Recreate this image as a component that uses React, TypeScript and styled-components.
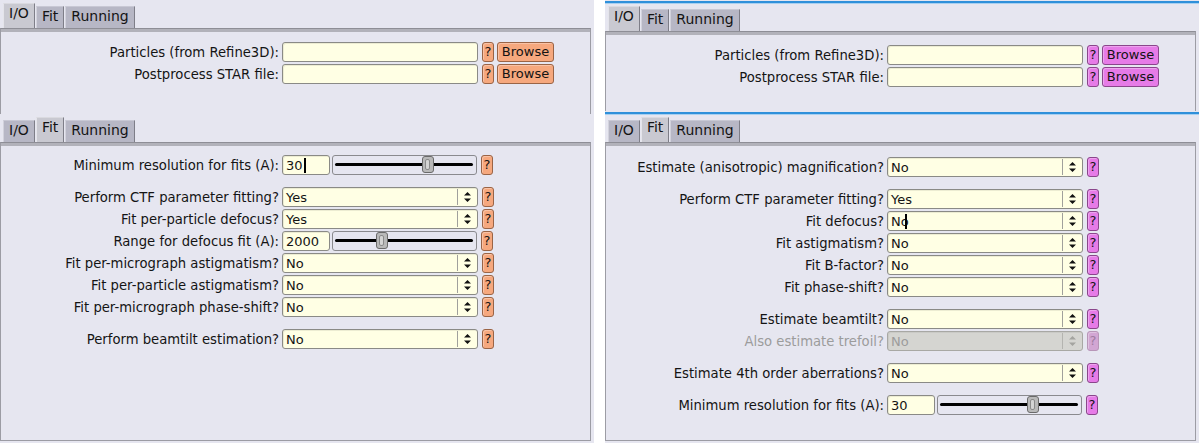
import React from 'react';
import styled, { createGlobalStyle } from 'styled-components';

const GlobalStyle = createGlobalStyle`
  html, body {
    margin: 0;
    padding: 0;
    background: #ffffff;
  }
  body {
    font-family: 'DejaVu Sans', 'Liberation Sans', sans-serif;
    color: #141414;
  }
`;

const accents = {
  orange: { fill: '#f6a87e', edge: '#9a6446' },
  pink: { fill: '#e67be7', edge: '#8a468b' },
};
type Accent = keyof typeof accents;

type FieldRow =
  | { kind: 'file'; label: string }
  | { kind: 'select'; label: string; value: string; spaced?: boolean; disabled?: boolean; caret?: boolean }
  | { kind: 'slider'; label: string; value: string; pos: number; spaced?: boolean; caret?: boolean };

const Page = styled.div`
  display: flex;
  gap: 11px;
  width: 1199px;
  height: 443px;
  overflow: hidden;
`;

const Half = styled.div`
  width: 594px;
  display: flex;
  flex-direction: column;
  background: #e6e6f0;
`;

const Frame = styled.section<{ $h?: number; $pad: number }>`
  display: flex;
  flex-direction: column;
  flex: ${p => (p.$h ? 'none' : 1)};
  height: ${p => (p.$h ? `${p.$h}px` : 'auto')};
  padding-top: ${p => p.$pad}px;
  box-sizing: border-box;
`;

const TopLine = styled.div`
  height: 2px;
  margin: 1px 0 3px;
  background: #2f90da;
  box-shadow: 0 1px 0 #a8d0f0;
`;

const TabBar = styled.div`
  display: flex;
  align-items: flex-end;
  gap: 1px;
  height: 25px;
  padding-left: 3px;
`;

const Tab = styled.div<{ $active?: boolean }>`
  box-sizing: border-box;
  height: ${p => (p.$active ? 25 : 22)}px;
  padding: 0 5px;
  font-size: 14px;
  line-height: 19px;
  color: #141414;
  background: ${p => (p.$active ? '#c9c9d1' : '#b7b7c5')};
  border-left: 1px solid ${p => (p.$active ? '#e4e4ea' : '#d2d2dc')};
  border-right: 1px solid #7e7e88;
  border-top: 1px solid ${p => (p.$active ? '#dadae0' : '#c8c8d4')};
`;

const Body = styled.div<{ $pad: number; $closed?: boolean }>`
  flex: 1;
  margin-right: 3px;
  margin-bottom: ${p => (p.$closed ? 2 : 0)}px;
  border-left: 1px solid #9c9ca4;
  border-right: 1px solid #9c9ca4;
  border-top: 1px solid #8e8e96;
  border-bottom: ${p => (p.$closed ? '1px solid #9c9ca4' : 'none')};
  box-shadow: inset 0 3px 0 #b2b2ba;
  padding-top: ${p => p.$pad}px;
`;

const Row = styled.div<{ $spaced?: boolean }>`
  display: flex;
  align-items: center;
  height: 20px;
  margin-top: ${p => (p.$spaced ? 12 : 2)}px;
`;

const Label = styled.span<{ $disabled?: boolean }>`
  box-sizing: border-box;
  width: 279px;
  padding-right: 1px;
  text-align: right;
  white-space: nowrap;
  font-size: 13.2px;
  color: ${p => (p.$disabled ? '#9c9c9c' : '#141414')};
`;

const Field = styled.div<{ $w: number; $disabled?: boolean }>`
  box-sizing: border-box;
  display: flex;
  align-items: center;
  width: ${p => p.$w}px;
  height: 20px;
  margin-left: 2px;
  padding-left: 3px;
  border: 1px solid ${p => (p.$disabled ? '#a8a8a4' : '#8a8a86')};
  border-radius: 3px;
  background: ${p => (p.$disabled ? '#d5d5d1' : '#ffffe4')};
  box-shadow: inset 1px 1px 0 ${p => (p.$disabled ? '#cacac6' : '#ececd2')};
  font-size: 13px;
  color: ${p => (p.$disabled ? '#9c9c9c' : '#141414')};
  white-space: nowrap;
`;

const FieldText = styled.span`
  flex: 1;
  display: flex;
  align-items: center;
`;

const Caret = styled.span<{ $overlap?: boolean }>`
  display: inline-block;
  width: 2px;
  height: 15px;
  margin-left: ${p => (p.$overlap ? -4 : 1)}px;
  background: #000;
`;

const ArrowBox = styled.span<{ $disabled?: boolean }>`
  display: flex;
  align-items: center;
  justify-content: center;
  width: 19px;
  height: 16px;
  border-left: 1px solid ${p => (p.$disabled ? '#b4b4b0' : '#a0a09c')};
`;

const Button = styled.button<{ $accent: Accent; $w: number; $gap: number; $disabled?: boolean }>`
  box-sizing: border-box;
  width: ${p => p.$w}px;
  height: 20px;
  margin: 0 0 0 ${p => p.$gap}px;
  padding: 0;
  border: 1px solid ${p => (p.$disabled ? '#b896b8' : accents[p.$accent].edge)};
  border-radius: 3px;
  background: ${p => (p.$disabled ? '#d2a6d3' : accents[p.$accent].fill)};
  box-shadow: inset 1px 1px 0 rgba(255, 255, 255, 0.3);
  font-family: 'DejaVu Sans', 'Liberation Sans', sans-serif;
  font-size: 13px;
  line-height: 18px;
  color: ${p => (p.$disabled ? '#a07ca0' : '#141414')};
`;

const Slider = styled.div`
  position: relative;
  box-sizing: border-box;
  width: 145px;
  height: 20px;
  margin-left: 2px;
  border: 1px solid #8a8a8e;
  border-radius: 3px;
  background: #e6e6f0;

  &::before {
    content: '';
    position: absolute;
    left: 2px;
    right: 3px;
    top: 7px;
    height: 3px;
    border-radius: 2px;
    background: #000;
  }
`;

const Thumb = styled.div`
  position: absolute;
  top: 0;
  box-sizing: border-box;
  width: 12px;
  height: 17px;
  margin-left: -6px;
  border: 1px solid #6a6a6a;
  border-radius: 3px;
  background: #b9b9b9;

  &::after {
    content: '';
    position: absolute;
    left: 2px;
    right: 3px;
    top: 2px;
    bottom: 2px;
    border: 1px solid #8a8a8a;
    border-radius: 2px;
    background: #d4d4d4;
  }
`;

const UpDown: React.FC<{ disabled?: boolean }> = ({ disabled }) => (
  <svg width="7" height="10" viewBox="0 0 7 10">
    <path d="M3.5 0 L7 3.6 H0 Z M0 6.4 H7 L3.5 10 Z" fill={disabled ? '#a4a4a0' : '#111'} />
  </svg>
);

const Help: React.FC<{ accent: Accent; disabled?: boolean }> = ({ accent, disabled }) => (
  <Button $accent={accent} $w={12} $gap={4} $disabled={disabled}>
    ?
  </Button>
);

const Control: React.FC<{ row: FieldRow; accent: Accent }> = ({ row, accent }) => {
  if (row.kind === 'file') {
    return (
      <Row>
        <Label>{row.label}</Label>
        <Field $w={196} />
        <Help accent={accent} />
        <Button $accent={accent} $w={57} $gap={3}>
          Browse
        </Button>
      </Row>
    );
  }
  if (row.kind === 'slider') {
    return (
      <Row $spaced={row.spaced}>
        <Label>{row.label}</Label>
        <Field $w={48}>
          {row.value}
          {row.caret && <Caret />}
        </Field>
        <Slider>
          <Thumb style={{ left: `${row.pos * 100}%` }} />
        </Slider>
        <Help accent={accent} />
      </Row>
    );
  }
  return (
    <Row $spaced={row.spaced}>
      <Label $disabled={row.disabled}>{row.label}</Label>
      <Field $w={196} $disabled={row.disabled}>
        <FieldText>
          {row.value}
          {row.caret && <Caret $overlap />}
        </FieldText>
        <ArrowBox $disabled={row.disabled}>
          <UpDown disabled={row.disabled} />
        </ArrowBox>
      </Field>
      <Help accent={accent} disabled={row.disabled} />
    </Row>
  );
};

const Window: React.FC<{
  active: string;
  accent: Accent;
  rows: FieldRow[];
  height?: number;
  pad: number;
  bodyPad: number;
  line?: boolean;
  closed?: boolean;
}> = ({ active, accent, rows, height, pad, bodyPad, line, closed }) => (
  <Frame $h={height} $pad={pad}>
    {line && <TopLine />}
    <TabBar>
      {['I/O', 'Fit', 'Running'].map(t => (
        <Tab key={t} $active={t === active}>
          {t}
        </Tab>
      ))}
    </TabBar>
    <Body $pad={bodyPad} $closed={closed}>
      {rows.map(r => (
        <Control key={r.label} row={r} accent={accent} />
      ))}
    </Body>
  </Frame>
);

const ioRows: FieldRow[] = [
  { kind: 'file', label: 'Particles (from Refine3D):' },
  { kind: 'file', label: 'Postprocess STAR file:' },
];

const oldFitRows: FieldRow[] = [
  { kind: 'slider', label: 'Minimum resolution for fits (A):', value: '30', pos: 0.664, caret: true },
  { kind: 'select', label: 'Perform CTF parameter fitting?', value: 'Yes', spaced: true },
  { kind: 'select', label: 'Fit per-particle defocus?', value: 'Yes' },
  { kind: 'slider', label: 'Range for defocus fit (A):', value: '2000', pos: 0.343 },
  { kind: 'select', label: 'Fit per-micrograph astigmatism?', value: 'No' },
  { kind: 'select', label: 'Fit per-particle astigmatism?', value: 'No' },
  { kind: 'select', label: 'Fit per-micrograph phase-shift?', value: 'No' },
  { kind: 'select', label: 'Perform beamtilt estimation?', value: 'No', spaced: true },
];

const newFitRows: FieldRow[] = [
  { kind: 'select', label: 'Estimate (anisotropic) magnification?', value: 'No' },
  { kind: 'select', label: 'Perform CTF parameter fitting?', value: 'Yes', spaced: true },
  { kind: 'select', label: 'Fit defocus?', value: 'No', caret: true },
  { kind: 'select', label: 'Fit astigmatism?', value: 'No' },
  { kind: 'select', label: 'Fit B-factor?', value: 'No' },
  { kind: 'select', label: 'Fit phase-shift?', value: 'No' },
  { kind: 'select', label: 'Estimate beamtilt?', value: 'No', spaced: true },
  { kind: 'select', label: 'Also estimate trefoil?', value: 'No', disabled: true },
  { kind: 'select', label: 'Estimate 4th order aberrations?', value: 'No', spaced: true },
  { kind: 'slider', label: 'Minimum resolution for fits (A):', value: '30', pos: 0.664, spaced: true },
];

const App: React.FC = () => (
  <>
    <GlobalStyle />
    <Page>
      <Half>
        <Window active="I/O" accent="orange" rows={ioRows} height={114} pad={3} bodyPad={11} />
        <Window active="Fit" accent="orange" rows={oldFitRows} pad={3} bodyPad={10} closed />
      </Half>
      <Half>
        <Window active="I/O" accent="pink" rows={ioRows} height={111} pad={0} bodyPad={11} line />
        <Window active="Fit" accent="pink" rows={newFitRows} pad={0} bodyPad={12} line closed />
      </Half>
    </Page>
  </>
);

export default App;
